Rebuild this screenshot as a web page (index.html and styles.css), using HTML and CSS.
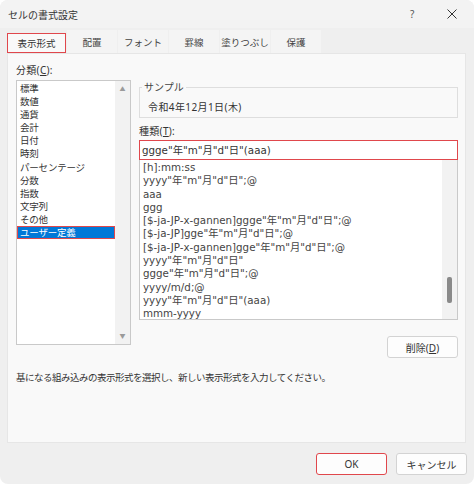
FILE: index.html
```html
<!DOCTYPE html>
<html lang="ja">
<head>
  <meta charset="UTF-8">
  <title>セルの書式設定</title>
  <link rel="stylesheet" href="styles.css">
</head>
<body>

  <div class="window">

    <!-- Title bar -->
    <div class="titlebar">
      <span class="title">セルの書式設定</span>
      <span class="help">?</span>
      <span class="close">
        <svg width="10" height="10" viewBox="0 0 10 10">
          <path d="M0.5 0.5 L9.5 9.5 M9.5 0.5 L0.5 9.5" stroke="#333" stroke-width="1" fill="none"/>
        </svg>
      </span>
    </div>

    <!-- Tabs -->
    <div class="tabs">
      <div class="tab active">表示形式</div>
      <div class="tab">配置</div>
      <div class="tab">フォント</div>
      <div class="tab">罫線</div>
      <div class="tab">塗りつぶし</div>
      <div class="tab">保護</div>
    </div>

    <div class="panel">
      <div class="columns">

        <!-- Category list -->
        <div class="col-left">
          <div class="label">分類(<u>C</u>):</div>
          <div class="listbox category">
            <div class="items">
              <div class="item">標準</div>
              <div class="item">数値</div>
              <div class="item">通貨</div>
              <div class="item">会計</div>
              <div class="item">日付</div>
              <div class="item">時刻</div>
              <div class="item">パーセンテージ</div>
              <div class="item">分数</div>
              <div class="item">指数</div>
              <div class="item">文字列</div>
              <div class="item">その他</div>
              <div class="item selected">ユーザー定義</div>
            </div>
            <div class="vscroll">
              <span class="arrow">▲</span>
              <span class="arrow">▼</span>
            </div>
          </div>
        </div>

        <!-- Sample and format codes -->
        <div class="col-right">
          <fieldset class="sample">
            <legend>サンプル</legend>
            <div class="sample-text">令和4年12月1日(木)</div>
          </fieldset>

          <div class="label type-label">種類(<u>T</u>):</div>
          <div class="format-input">ggge"年"m"月"d"日"(aaa)</div>

          <div class="listbox formats">
            <div class="items">
              <div class="item">[h]:mm:ss</div>
              <div class="item">yyyy"年"m"月"d"日";@</div>
              <div class="item">aaa</div>
              <div class="item">ggg</div>
              <div class="item">[$-ja-JP-x-gannen]ggge"年"m"月"d"日";@</div>
              <div class="item">[$-ja-JP]gge"年"m"月"d"日";@</div>
              <div class="item">[$-ja-JP-x-gannen]gge"年"m"月"d"日";@</div>
              <div class="item">yyyy"年"m"月"d"日"</div>
              <div class="item">ggge"年"m"月"d"日";@</div>
              <div class="item">yyyy/m/d;@</div>
              <div class="item">yyyy"年"m"月"d"日"(aaa)</div>
              <div class="item">mmm-yyyy</div>
            </div>
            <div class="vscroll">
              <div class="thumb"></div>
            </div>
          </div>

          <div class="delete-row">
            <button class="btn">削除(<u>D</u>)</button>
          </div>
        </div>
      </div>

      <div class="hint">基になる組み込みの表示形式を選択し、新しい表示形式を入力してください。</div>
    </div>

    <!-- Footer -->
    <div class="footer">
      <button class="btn ok">OK</button>
      <button class="btn">キャンセル</button>
    </div>

  </div>

</body>
</html>
```

FILE: styles.css
```css
body {
  margin: 0;
  background: #fff;
  font-family: "Noto Sans", "Noto Sans CJK JP", sans-serif;
  font-size: 9.5px;
  color: #222;
}

.window {
  width: 474px;
  height: 484px;
  background: #efefef;
  border-radius: 8px;
  overflow: hidden;
  display: flex;
  flex-direction: column;
}

/* Title bar */
.titlebar {
  height: 28px;
  background: #f3f3f3;
  display: flex;
  align-items: center;
  padding-left: 8px;
  font-size: 10px;
  color: #333;
}

.titlebar .title {
  flex: 1;
}

.titlebar .help {
  width: 10px;
  color: #555;
  margin-right: 27px;
}

.titlebar .close {
  width: 10px;
  height: 10px;
  margin-right: 17px;
  display: flex;
}

/* Tabs */
.tabs {
  display: flex;
  margin: 2px 0 0 7px;
  height: 23px;
}

.tab {
  width: 50px;
  margin-right: 1px;
  background: #f4f4f4;
  display: flex;
  align-items: center;
  justify-content: center;
  color: #444;
}

.tab.active {
  width: 59px;
  background: #f9f9f9;
  box-sizing: border-box;
  border: 1px solid #e0474c;
  margin-top: 3px;
  color: #333;
}

/* Main panel */
.panel {
  margin: 0 8px 0 7px;
  height: 390px;
  box-sizing: border-box;
  background: #f9f9f9;
  border: 1px solid #e6e6e6;
  padding: 9px 7px 0 8px;
}

.columns {
  display: flex;
  gap: 8px;
}

.col-left {
  width: 115px;
}

.col-right {
  width: 319px;
  padding-top: 17px;
}

.label {
  line-height: 14px;
  height: 14px;
  font-size: 10px;
  letter-spacing: 0.3px;
  color: #333;
}

.listbox {
  background: #fff;
  border: 1px solid #c9c9c9;
  box-sizing: border-box;
  display: flex;
}

.listbox .items {
  flex: 1;
  padding-top: 1px;
}

.category {
  margin-top: 3px;
  height: 265px;
}

.category .item {
  line-height: 13.1px;
  padding-left: 3px;
  color: #333;
  letter-spacing: -0.2px;
}

.category .item.selected {
  background: #0078d7;
  color: #fff;
  outline: 1px solid #e0474c;
  outline-offset: -1px;
}

.vscroll {
  width: 15px;
  background: #f2f2f2;
  display: flex;
  flex-direction: column;
  justify-content: space-between;
  align-items: center;
}

.vscroll .arrow {
  font-size: 6px;
  color: #9a9a9a;
  line-height: 16px;
}

/* Sample group */
.sample {
  margin: 0;
  padding: 0 8px 3px 8px;
  border: 1px solid #dedede;
  min-inline-size: 0;
}

.sample legend {
  padding: 0 2px;
  margin-left: -6px;
  line-height: 14px;
  font-size: 10px;
  color: #444;
}

.sample-text {
  line-height: 14px;
  margin-top: 6px;
  font-size: 10px;
  letter-spacing: 0.4px;
  color: #333;
}

.type-label {
  margin-top: 6px;
}

.format-input {
  margin-top: 2px;
  height: 20px;
  box-sizing: border-box;
  background: #fff;
  border: 1px solid #e0474c;
  padding-left: 2px;
  line-height: 18px;
  font-family: "DejaVu Sans", "Noto Sans CJK JP", sans-serif;
  font-size: 10.3px;
  color: #333;
}

.formats {
  height: 160px;
  border-top: none;
}

.formats .item {
  line-height: 13.3px;
  padding-left: 3px;
  font-family: "DejaVu Sans", "Noto Sans CJK JP", sans-serif;
  font-size: 10.3px;
  color: #444;
  white-space: nowrap;
}

.formats .vscroll {
  justify-content: flex-start;
}

.formats .thumb {
  width: 5px;
  height: 26px;
  margin-top: 117px;
  background: #8a8a8a;
  border-radius: 2px;
}

.delete-row {
  display: flex;
  justify-content: flex-end;
  margin-top: 16px;
}

.btn {
  width: 71px;
  height: 22px;
  box-sizing: border-box;
  background: #fdfdfd;
  border: 1px solid #d3d3d3;
  border-radius: 3px;
  font-family: inherit;
  font-size: 10px;
  color: #333;
  padding: 0;
}

.hint {
  margin-top: 13px;
  line-height: 14px;
  letter-spacing: -0.5px;
  color: #333;
}

/* Footer */
.footer {
  display: flex;
  justify-content: flex-end;
  gap: 9px;
  padding: 10px 7px 0 0;
}

.btn.ok {
  border: 1.5px solid #e0474c;
}
```
